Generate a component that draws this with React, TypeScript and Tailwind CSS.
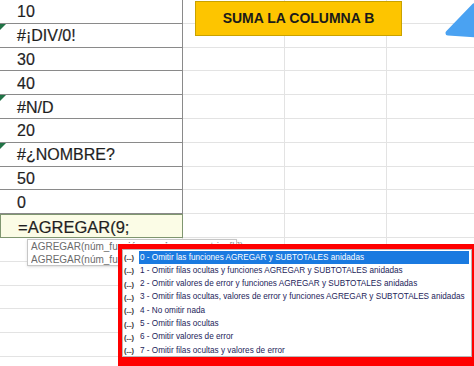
import React from "react";

const values = ["10", "#¡DIV/0!", "30", "40", "#N/D", "20", "#¿NOMBRE?", "50", "0"];
const flagged = [1, 4, 6];

const options = [
  "0 - Omitir las funciones AGREGAR y SUBTOTALES anidadas",
  "1 - Omitir filas ocultas y funciones AGREGAR y SUBTOTALES anidadas",
  "2 - Omitir valores de error y funciones AGREGAR y SUBTOTALES anidadas",
  "3 - Omitir filas ocultas, valores de error y funciones AGREGAR y SUBTOTALES anidadas",
  "4 - No omitir nada",
  "5 - Omitir filas ocultas",
  "6 - Omitir valores de error",
  "7 - Omitir filas ocultas y valores de error",
];

const GridRow: React.FC<{ children?: React.ReactNode; first?: string }> = ({ children, first }) => (
  <div className="flex h-[23.8px] shrink-0">
    <div className={`relative w-[183px] shrink-0 flex items-center pl-[17px] ${first ?? "border-b border-r border-[#e3e3e3]"}`}>
      {children}
    </div>
    <div className="w-[102px] shrink-0 border-b border-r border-[#e3e3e3]" />
    <div className="w-[102px] shrink-0 border-b border-r border-[#e3e3e3]" />
    <div className="flex-1 border-b border-[#e3e3e3]" />
  </div>
);

export default function App() {
  return (
    <div
      className="relative w-[474px] h-[366px] overflow-hidden bg-white text-[#1f1f1f]"
      style={{ fontFamily: '"Liberation Sans", Arial, sans-serif' }}
    >
      <div className="flex flex-col">
        {values.map((v, i) => (
          <GridRow key={i} first="border-b border-r-[1.5px] border-[#8a8a8a]">
            {flagged.includes(i) && (
              <span className="absolute left-0 top-0 w-0 h-0 border-t-[6px] border-r-[6px] border-t-[#217346] border-r-transparent" />
            )}
            <span className="text-[16px] leading-none pt-[2px] [-webkit-text-stroke:0.2px_#1f1f1f]">{v}</span>
          </GridRow>
        ))}
        <GridRow first="border-[1.5px] border-[#7f9670] bg-[#fbfce6]">
          <span className="text-[16.5px] leading-none pt-[2px] [-webkit-text-stroke:0.2px_#1f1f1f]">=AGREGAR(9;</span>
        </GridRow>
        {[0, 1, 2, 3, 4, 5].map((i) => (
          <GridRow key={`e${i}`} />
        ))}
      </div>

      {/* title box */}
      <div className="absolute left-[195px] top-[1px] w-[207px] h-[35px] bg-[#fdc500] border border-[#c9a200] flex items-center justify-center">
        <span className="text-[14px] font-bold text-[#1a1a1a]">SUMA LA COLUMNA B</span>
      </div>

      {/* blue corner shape */}
      <svg className="absolute left-[444px] top-[2px]" width="34" height="36" viewBox="0 0 34 36">
        <polygon points="4,31 30,4 34,33" fill="#4aa2f2" stroke="#4aa2f2" strokeWidth="5" strokeLinejoin="round" />
      </svg>

      {/* function tooltip */}
      <div className="absolute left-[27px] top-[239px] w-[210px] h-[27px] bg-white border border-[#c6c6c6] shadow-sm px-[3px] pt-[1px] text-[10px] leading-[12.5px] text-[#6b6b6b] whitespace-nowrap">
        <div className="w-[87px] overflow-visible">
          AGREGAR(núm_función; <b className="text-[#8a8a8a]">opciones</b>; <span className="text-[#9a9a9a]">matriz; [k])</span>
        </div>
        <div className="w-[87px] overflow-hidden">AGREGAR(núm_función; opciones; ref1; ...)</div>
      </div>

      {/* options list */}
      <div className="absolute left-[118px] top-[244px] w-[360px] h-[126px] bg-[#ff0000] pl-[4px] pt-[5px] pr-[6px] pb-[9px]">
        <div className="w-[350px] h-[108px] bg-white border border-[#b8b8b8] pt-[1px]">
          {options.map((o, i) => (
            <div key={i} className="flex items-center h-[13.3px] whitespace-nowrap">
              <span className="w-[16px] shrink-0 pl-[1px] text-[7.5px] font-bold text-[#333] tracking-[-0.3px]">(...)</span>
              <span
                className={`flex-1 h-full flex items-center pl-[1px] mr-[2px] text-[8.2px] ${
                  i === 0 ? "bg-[#1a7ae0] text-white" : "text-[#24245a]"
                }`}
              >
                {o}
              </span>
            </div>
          ))}
        </div>
      </div>
    </div>
  );
}
